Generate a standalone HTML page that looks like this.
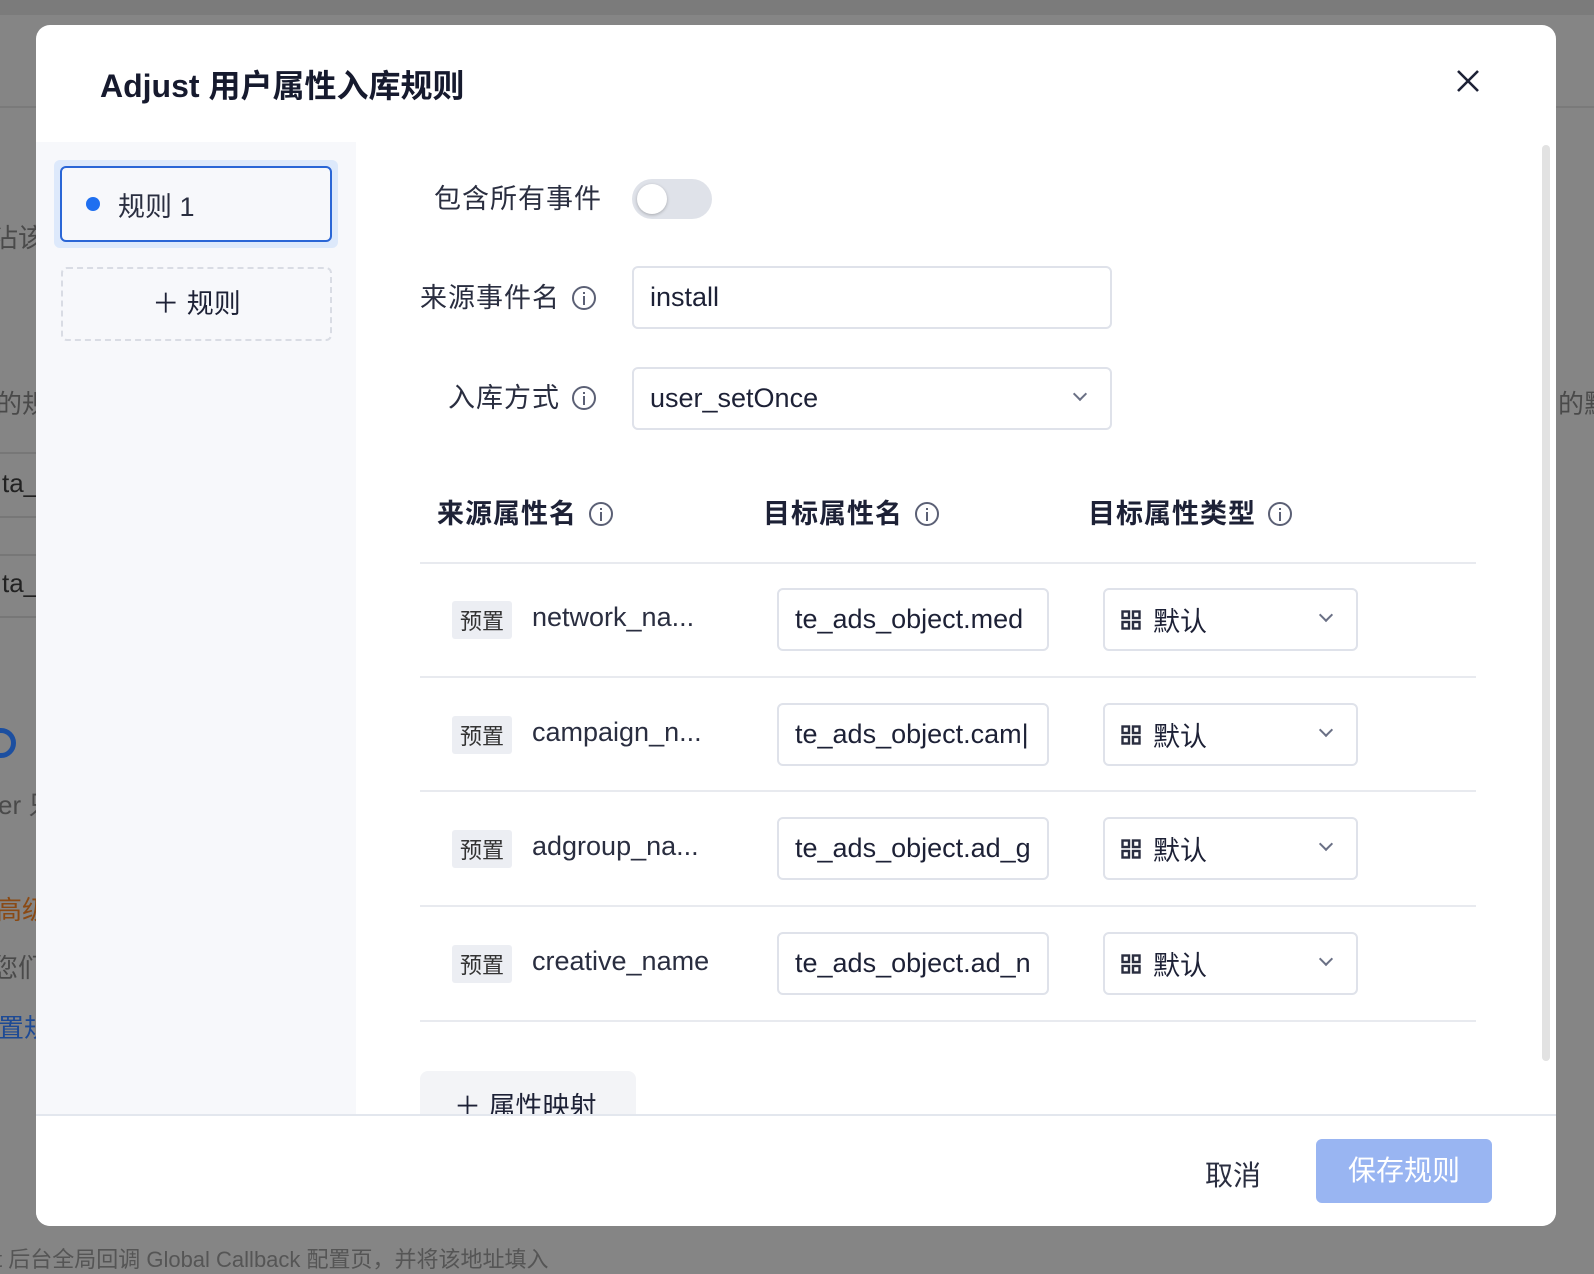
<!DOCTYPE html>
<html><head><meta charset="utf-8"><style>
*{box-sizing:border-box;margin:0;padding:0}
body{width:1594px;height:1260px;overflow:hidden;background:#858585;font-family:"Liberation Sans","Noto Sans CJK SC",sans-serif;color:#1d2136;position:relative}
.a{position:absolute}
.bg{color:#4a4a4a;font-size:26px;white-space:nowrap}
.modal{left:36px;top:25px;width:1520px;height:1201px;background:#fff;border-radius:14px;overflow:hidden}
.lbl{font-size:27px;white-space:nowrap;color:#2a2e40}
.inp{border:2px solid #dfe2ea;border-radius:6px;background:#fff;font-size:27px;display:flex;align-items:center;padding-left:16px;white-space:nowrap;overflow:hidden}
.info{display:inline-block;width:24px;height:24px;border:2px solid #5b6075;border-radius:50%;position:relative;vertical-align:middle;margin-left:12px;top:-2px}
.info:before{content:"";position:absolute;left:9px;top:4px;width:2px;height:2px;background:#5b6075}
.info:after{content:"";position:absolute;left:9px;top:8px;width:2px;height:9px;background:#5b6075}
.hd{font-size:27px;font-weight:bold;white-space:nowrap}
.line{position:absolute;height:2px;background:#e8eaef;left:384px;width:1056px}
.tag{background:#eceef3;font-size:22px;padding:3px 8px;border-radius:3px;color:#333;white-space:nowrap;display:inline-block}
.chev{position:absolute;width:10px;height:10px;border-right:2px solid #6a7085;border-bottom:2px solid #6a7085;transform:rotate(45deg)}
.grid{display:inline-block;width:20px;height:20px;margin-right:12px;vertical-align:middle}
</style></head><body>
<div class="a" style="left:0;top:0;width:1594px;height:15px;background:#7b7b7b"></div>
<div class="a" style="left:0;top:106px;width:1594px;height:2px;background:#7a7a7a"></div>
<div class="a bg" style="left:-8px;top:218px">沾该平</div>
<div class="a bg" style="left:-4px;top:384px">的规</div>
<div class="a bg" style="left:1558px;top:384px">的默</div>
<div class="a" style="left:0;top:452px;width:40px;height:2px;background:#777"></div>
<div class="a bg" style="left:2px;top:468px;color:#222">ta_</div>
<div class="a" style="left:0;top:516px;width:40px;height:2px;background:#777"></div>
<div class="a" style="left:0;top:554px;width:40px;height:2px;background:#777"></div>
<div class="a bg" style="left:2px;top:568px;color:#222">ta_</div>
<div class="a" style="left:0;top:616px;width:40px;height:2px;background:#777"></div>
<div class="a" style="left:-14px;top:728px;width:30px;height:30px;border:5px solid #1c4fa0;border-radius:50%"></div>
<div class="a bg" style="left:-2px;top:785px">er 只</div>
<div class="a bg" style="left:-4px;top:890px;color:#8a4a14">高级</div>
<div class="a bg" style="left:-8px;top:948px">您们不</div>
<div class="a bg" style="left:-2px;top:1008px;color:#1d4a95">置规</div>
<div class="a bg" style="left:-4px;top:1242px;font-size:22px;color:#555">t 后台全局回调 Global Callback 配置页，并将该地址填入</div>

<div class="a modal">
 <div class="a" style="left:64px;top:36px;font-size:32px;font-weight:bold;color:#161a2e;white-space:nowrap">Adjust 用户属性入库规则</div>
 <svg class="a" style="left:1420px;top:44px" width="24" height="24" viewBox="0 0 24 24"><path d="M2 2L22 22M22 2L2 22" stroke="#1d2136" stroke-width="2.6"/></svg>
 <div class="a" style="left:0;top:117px;width:320px;height:1000px;background:#f7f8fb"></div>
 <div class="a" style="left:18px;top:135px;width:284px;height:88px;background:#dde9fb;border-radius:6px"></div>
 <div class="a" style="left:24px;top:141px;width:272px;height:76px;border:2px solid #2a66d6;border-radius:6px;background:#f7f8fb"></div>
 <div class="a" style="left:50px;top:172px;width:14px;height:14px;border-radius:50%;background:#1f6ff0"></div>
 <div class="a lbl" style="left:82px;top:160px">规则 1</div>
 <div class="a" style="left:25px;top:242px;width:271px;height:74px;border:2px dashed #d9dce4;border-radius:6px;text-align:center;line-height:70px;font-size:27px">＋ 规则</div>

 <div class="a lbl" style="left:398px;top:152px;letter-spacing:1px">包含所有事件</div>
 <div class="a" style="left:596px;top:154px;width:80px;height:40px;border-radius:20px;background:#dfe2e9"></div>
 <div class="a" style="left:601px;top:159px;width:30px;height:30px;border-radius:50%;background:#fff;box-shadow:0 1px 3px rgba(0,0,0,.25)"></div>
 <div class="a lbl" style="left:384px;top:251px;letter-spacing:1px">来源事件名<span class="info"></span></div>
 <div class="a inp" style="left:596px;top:241px;width:480px;height:63px">install</div>
 <div class="a lbl" style="left:412px;top:351px;letter-spacing:1px">入库方式<span class="info"></span></div>
 <div class="a inp" style="left:596px;top:342px;width:480px;height:63px">user_setOnce</div>
 <div class="chev" style="left:1039px;top:364px"></div>

 <div class="a hd" style="left:401px;top:467px;letter-spacing:1px">来源属性名<span class="info"></span></div>
 <div class="a hd" style="left:727px;top:467px;letter-spacing:1px">目标属性名<span class="info"></span></div>
 <div class="a hd" style="left:1052px;top:467px;letter-spacing:1px">目标属性类型<span class="info"></span></div>
 <div class="line" style="top:537px"></div>

 <div class="a" style="left:0;top:563px">
  <div class="a" style="left:416px;top:13px"><span class="tag">预置</span></div>
  <div class="a lbl" style="left:496px;top:14px">network_na...</div>
  <div class="a inp" style="left:741px;top:0;width:272px;height:63px">te_ads_object.med</div>
  <div class="a inp" style="left:1067px;top:0;width:255px;height:63px"><svg class="grid" viewBox="0 0 20 20"><g fill="none" stroke="#2a2e40" stroke-width="2.4"><rect x="1.5" y="1.5" width="6.5" height="6.5"/><rect x="12" y="1.5" width="6.5" height="6.5"/><rect x="1.5" y="12" width="6.5" height="6.5"/><rect x="12" y="12" width="6.5" height="6.5"/></g></svg>默认</div>
  <div class="chev" style="left:1285px;top:22px"></div>
  <div class="line" style="top:88px"></div>
 </div>
 <div class="a" style="left:0;top:678px">
  <div class="a" style="left:416px;top:13px"><span class="tag">预置</span></div>
  <div class="a lbl" style="left:496px;top:14px">campaign_n...</div>
  <div class="a inp" style="left:741px;top:0;width:272px;height:63px">te_ads_object.cam|</div>
  <div class="a inp" style="left:1067px;top:0;width:255px;height:63px"><svg class="grid" viewBox="0 0 20 20"><g fill="none" stroke="#2a2e40" stroke-width="2.4"><rect x="1.5" y="1.5" width="6.5" height="6.5"/><rect x="12" y="1.5" width="6.5" height="6.5"/><rect x="1.5" y="12" width="6.5" height="6.5"/><rect x="12" y="12" width="6.5" height="6.5"/></g></svg>默认</div>
  <div class="chev" style="left:1285px;top:22px"></div>
  <div class="line" style="top:87px"></div>
 </div>
 <div class="a" style="left:0;top:792px">
  <div class="a" style="left:416px;top:13px"><span class="tag">预置</span></div>
  <div class="a lbl" style="left:496px;top:14px">adgroup_na...</div>
  <div class="a inp" style="left:741px;top:0;width:272px;height:63px">te_ads_object.ad_g</div>
  <div class="a inp" style="left:1067px;top:0;width:255px;height:63px"><svg class="grid" viewBox="0 0 20 20"><g fill="none" stroke="#2a2e40" stroke-width="2.4"><rect x="1.5" y="1.5" width="6.5" height="6.5"/><rect x="12" y="1.5" width="6.5" height="6.5"/><rect x="1.5" y="12" width="6.5" height="6.5"/><rect x="12" y="12" width="6.5" height="6.5"/></g></svg>默认</div>
  <div class="chev" style="left:1285px;top:22px"></div>
  <div class="line" style="top:88px"></div>
 </div>
 <div class="a" style="left:0;top:907px">
  <div class="a" style="left:416px;top:13px"><span class="tag">预置</span></div>
  <div class="a lbl" style="left:496px;top:14px">creative_name</div>
  <div class="a inp" style="left:741px;top:0;width:272px;height:63px">te_ads_object.ad_n</div>
  <div class="a inp" style="left:1067px;top:0;width:255px;height:63px"><svg class="grid" viewBox="0 0 20 20"><g fill="none" stroke="#2a2e40" stroke-width="2.4"><rect x="1.5" y="1.5" width="6.5" height="6.5"/><rect x="12" y="1.5" width="6.5" height="6.5"/><rect x="1.5" y="12" width="6.5" height="6.5"/><rect x="12" y="12" width="6.5" height="6.5"/></g></svg>默认</div>
  <div class="chev" style="left:1285px;top:22px"></div>
  <div class="line" style="top:88px"></div>
 </div>

 <div class="a" style="left:384px;top:1046px;width:216px;height:70px;background:#f3f4f7;border-radius:8px;font-size:27px;padding:14px 0 0 34px;white-space:nowrap">＋ 属性映射</div>
 <div class="a" style="left:1506px;top:120px;width:8px;height:916px;background:#e2e2e2;border-radius:4px"></div>
 <div class="a" style="left:0;top:1089px;width:1520px;height:2px;background:#e3e7ee"></div>
 <div class="a" style="left:0;top:1091px;width:1520px;height:120px;background:#fff"></div>
 <div class="a lbl" style="left:1169px;top:1129px;font-size:28px">取消</div>
 <div class="a" style="left:1280px;top:1114px;width:176px;height:64px;background:#99b5f2;border-radius:6px;color:#fff;font-size:28px;text-align:center;line-height:64px">保存规则</div>
</div>
</body></html>
